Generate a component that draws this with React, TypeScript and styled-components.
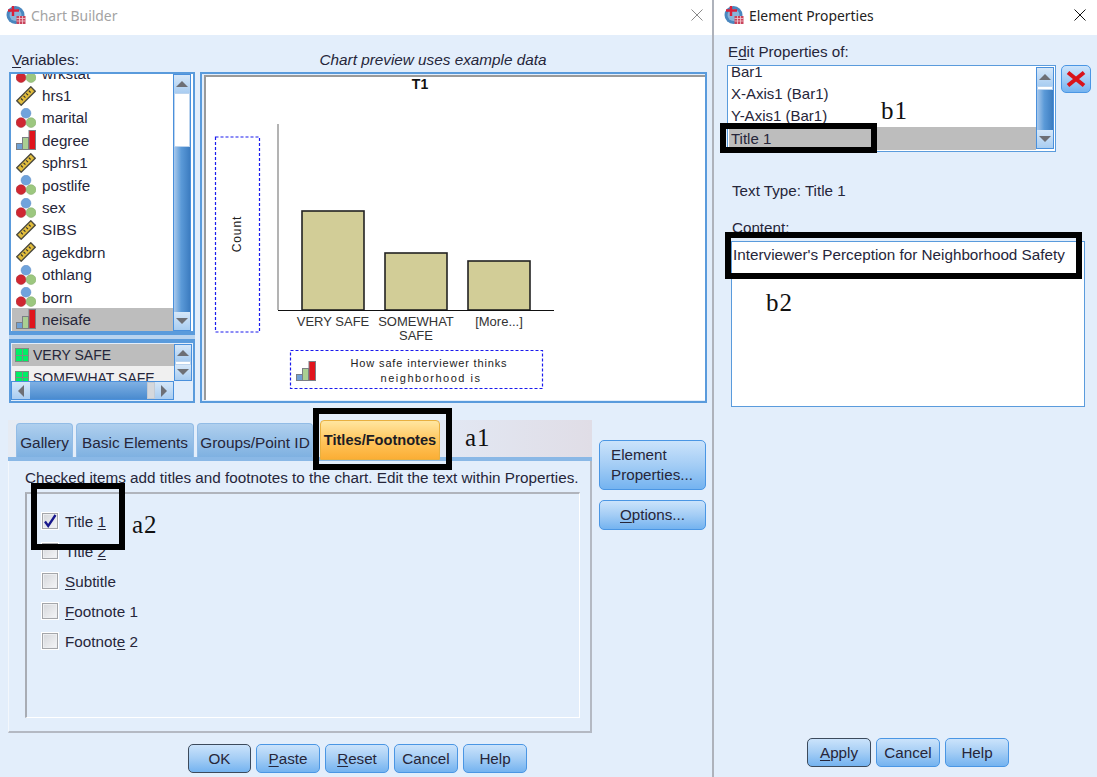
import React from 'react';
import styled, { createGlobalStyle, css } from 'styled-components';

const GlobalStyle = createGlobalStyle`
  html, body { margin: 0; padding: 0; background: #fff; }
  body { font-family: "Liberation Sans", Arial, sans-serif; color: #26263a; }
  * { box-sizing: border-box; }
  u { text-underline-offset: 2px; }
`;

const Shell = styled.div`
  position: relative;
  display: flex;
  width: 1097px;
  height: 777px;
  overflow: hidden;
`;

const Win = styled.div<{ $divider?: boolean }>`
  display: flex;
  flex-direction: column;
  height: 100%;
  ${(p) => (p.$divider ? 'width: 714px; border-right: 2px solid #aeb2bb;' : 'flex: 1;')}
`;

const TitleBar = styled.div<{ $left: number; $right: number }>`
  display: flex;
  align-items: center;
  height: 35px;
  flex: none;
  padding: 0 ${(p) => p.$right}px 5px ${(p) => p.$left}px;
  background: #fff;
`;

const TitleText = styled.span<{ $inactive?: boolean }>`
  flex: 1;
  margin-left: 5px;
  font-family: "Noto Sans", sans-serif;
  font-size: 13.9px;
  color: ${(p) => (p.$inactive ? '#a3a3a3' : '#222')};
`;

const Body = styled.div`
  display: flex;
  flex: 1;
  flex-direction: column;
  min-height: 0;
  background: #e3eefb;
`;

const CaptionRow = styled.div`
  display: grid;
  grid-template-columns: 188px 1fr;
  height: 37px;
  flex: none;
  padding-left: 12px;
  padding-top: 16px;
  font-size: 15.3px;
`;

const PreviewNote = styled.div`
  padding-right: 46px;
  text-align: center;
  font-style: italic;
`;

const TopRow = styled.div`
  display: grid;
  grid-template-columns: 186px 507px;
  gap: 5px;
  height: 331px;
  flex: none;
  margin-left: 9px;
`;

const SourceColumn = styled.div`
  display: flex;
  flex-direction: column;
`;

const listFrame = css`
  display: flex;
  overflow: hidden;
  border: 2px solid #5a9bdc;
  background: #fff;
`;

const VariableBox = styled.div`
  ${listFrame}
  height: 261px;
  padding-right: 1px;
`;

const Rows = styled.div<{ $shift: number }>`
  flex: 1;
  min-width: 0;
  padding-left: 1px;
  margin-top: ${(p) => p.$shift}px;
`;

const Row = styled.div<{ $selected?: boolean }>`
  display: flex;
  align-items: center;
  gap: 6px;
  height: 22.4px;
  padding-left: 4px;
  font-size: 15.2px;
  white-space: nowrap;
  background: ${(p) => (p.$selected ? '#bdbdbd' : 'transparent')};
`;

const Splitter = styled.div`
  height: 8px;
  border-top: 2px solid #5a9bdc;
  border-bottom: 2px solid #5a9bdc;
  background: #b8d3ef;
`;

const CategoryBox = styled.div`
  ${listFrame}
  position: relative;
  flex: 1;
  padding-top: 1px;
  background: #e3eefb;
`;

const CategoryRows = styled.div`
  flex: 1;
  min-width: 0;
  height: 37px;
  padding-left: 1px;
  overflow: hidden;
`;

const CategoryRow = styled(Row)`
  gap: 4px;
  padding-left: 3px;
  font-size: 14px;
  background: ${(p) => (p.$selected ? '#bdbdbd' : '#f0f0f0')};
`;

const Swatch = styled.span`
  display: grid;
  grid-template-columns: 1fr 1fr;
  gap: 1px;
  width: 14px;
  height: 14px;
  padding: 1px;
  background: #7f8a83;
  & > i { background: #00ee66; }
`;

const VScroll = styled.div<{ $h?: number }>`
  display: flex;
  flex: none;
  flex-direction: column;
  width: 18px;
  height: ${(p) => (p.$h ? `${p.$h}px` : '100%')};
  border: 1px solid #4a90dc;
  margin-right: 1px;
`;

const VTrack = styled.div`
  flex: 1;
  background: linear-gradient(90deg, #a9c9ec, #5b9ad8 45%, #3c7cc0);
`;

const VThumb = styled.div<{ $h: number }>`
  flex: none;
  height: ${(p) => p.$h}px;
  background: #fff;
  border: 1px solid #bcd4ee;
`;

const ArrowCell = styled.div`
  display: flex;
  flex: 1 0 auto;
  align-items: center;
  justify-content: center;
  min-height: 15px;
  background: linear-gradient(#d6e7f8, #a9cdf1);
`;

const FixedArrowCell = styled(ArrowCell)`
  flex: none;
  height: 18px;
`;

const Triangle = styled.i<{ $dir: 'up' | 'down' | 'left' | 'right' }>`
  width: 0;
  height: 0;
  ${(p) =>
    p.$dir === 'up' || p.$dir === 'down'
      ? `border-left: 6px solid transparent; border-right: 6px solid transparent;
         border-${p.$dir === 'up' ? 'bottom' : 'top'}: 6px solid #6d6f75;`
      : `border-top: 6px solid transparent; border-bottom: 6px solid transparent;
         border-${p.$dir === 'left' ? 'right' : 'left'}: 6px solid #6d6f75;`}
`;

const HScroll = styled.div`
  position: absolute;
  left: 0;
  right: 19px;
  bottom: 1px;
  display: flex;
  height: 19px;
  border: 1px solid #4a90dc;
  background: linear-gradient(#7fb0e3, #4a8bcf);
`;

const HArrow = styled(ArrowCell)`
  flex: none;
  width: 18px;
`;

const HThumb = styled.div`
  width: 8px;
  margin-left: auto;
  background: #d5d8dc;
  border: 1px solid #c3cbd4;
`;

const PreviewFrame = styled.div`
  height: 331px;
  border: 2px solid #5a9bdc;
  padding: 1px 0 1px 2px;
  background: #e3eefb;
`;

const PreviewCanvas = styled.div`
  width: 100%;
  height: 100%;
  overflow: hidden;
  border-top: 2px solid #9a9a9a;
  border-left: 2px solid #9a9a9a;
  background: #fff;
`;

const TabArea = styled.div`
  display: grid;
  grid-template-columns: 584px 107px;
  gap: 7px;
  margin: 17px 0 0 8px;
`;

const TabStrip = styled.div`
  display: flex;
  align-items: flex-end;
  gap: 3px;
  height: 41px;
  padding-left: 8px;
  border-bottom: 4px solid #8ab8e6;
  background: linear-gradient(90deg, #e6ebf3, #e3eefb 15%, #e3eefb 60%, #e0dde6);
`;

const Tab = styled.div<{ $w: number; $active?: boolean }>`
  flex: none;
  display: flex;
  align-items: center;
  justify-content: center;
  width: ${(p) => p.$w}px;
  white-space: nowrap;
  overflow: hidden;
  border-radius: 4px 4px 0 0;
  ${(p) =>
    p.$active
      ? css`
          height: 40px;
          margin: 0 0 -3px 4px;
          padding-bottom: 1px;
          font-size: 14.6px;
          font-weight: bold;
          color: #1c1c24;
          border: 1px solid #e8b040;
          background: linear-gradient(#ffe6a0, #ffc45a 55%, #fbae35);
        `
      : css`
          height: 34px;
          font-size: 15.4px;
          padding-top: 4px;
          border: 1px solid #92bce6;
          border-bottom: none;
          background: linear-gradient(#afcfee, #7fb1e1);
        `}
`;

const TabPanel = styled.div`
  height: 272px;
  padding: 8px 0 0 16px;
  border-right: 2px solid #b4b9c3;
  border-bottom: 2px solid #b4b9c3;
  border-left: 1px solid #f3f7fc;
  font-size: 15.25px;
  white-space: nowrap;
`;

const GroupBox = styled.div`
  width: 555px;
  height: 226px;
  margin-top: 6px;
  padding-top: 12px;
  border-top: 2px solid #b0b4bc;
  border-left: 2px solid #a8acb4;
  border-right: 1px solid #fff;
  border-bottom: 1px solid #fff;
`;

const CheckRow = styled.div`
  display: flex;
  align-items: center;
  gap: 7px;
  height: 30px;
  padding-left: 15px;
`;

const CheckBoxMark = styled.span`
  display: flex;
  align-items: center;
  justify-content: center;
  width: 16px;
  height: 16px;
  border: 1px solid #a4a6aa;
  outline: 1px solid #fff;
  background: linear-gradient(135deg, #d5d7db, #f4f5f7);
  box-shadow: inset 0 0 0 1px #eceef1;
`;

const SideButtons = styled.div`
  display: flex;
  flex-direction: column;
  gap: 10px;
  padding-top: 20px;
`;

const Footer = styled.div<{ $left: number; $bottom: number }>`
  display: flex;
  gap: 5px;
  margin-top: auto;
  padding: 0 0 ${(p) => p.$bottom}px ${(p) => p.$left}px;
`;

const Btn = styled.div<{ $w?: number; $h?: number; $default?: boolean; $left?: boolean }>`
  display: flex;
  align-items: center;
  justify-content: ${(p) => (p.$left ? 'flex-start' : 'center')};
  width: ${(p) => (p.$w ? `${p.$w}px` : '100%')};
  height: ${(p) => p.$h ?? 29}px;
  padding-left: ${(p) => (p.$left ? '11px' : '0')};
  font-size: 15.2px;
  line-height: 20px;
  border: 1.5px solid ${(p) => (p.$default ? '#3c4a5c' : '#4a96e4')};
  border-radius: 5px;
  background: linear-gradient(#cbe3fb, #a4cdf5 50%, #74b3f0);
`;

const RemoveBtn = styled(Btn)`
  flex: none;
  margin-left: 5px;
`;

const PropLabel = styled.div`
  height: 30px;
  padding: 9px 0 0 1px;
  font-size: 15.2px;
  line-height: 16px;
`;

const PropBody = styled.div`
  padding-left: 13px;
`;

const PropRow = styled.div`
  display: flex;
  align-items: flex-start;
`;

const ElementBox = styled.div`
  ${listFrame}
  width: 329px;
  height: 87px;
  padding-top: 1px;
  border-width: 1.5px;
`;

const ElementRow = styled(Row)`
  padding-left: 2px;
  font-size: 15px;
`;

const TextType = styled.div`
  margin: 30px 0 0 5px;
  font-size: 15.2px;
  line-height: 18px;
`;

const ContentLabel = styled.div`
  margin: 19px 0 0 5px;
  font-size: 15.2px;
  line-height: 18px;
`;

const ContentBox = styled.div`
  width: 354px;
  height: 166px;
  margin: 4px 0 0 4px;
  padding: 4px 0 0 1px;
  border: 1.5px solid #5a9bdc;
  background: #fff;
  font-size: 15.25px;
  white-space: nowrap;
`;

const Callout = styled.div<{ $x: number; $y: number; $w: number; $h: number }>`
  position: absolute;
  left: ${(p) => p.$x}px;
  top: ${(p) => p.$y}px;
  width: ${(p) => p.$w}px;
  height: ${(p) => p.$h}px;
  border: 6.5px solid #000;
`;

const CalloutTag = styled.div<{ $x: number; $y: number }>`
  position: absolute;
  left: ${(p) => p.$x}px;
  top: ${(p) => p.$y}px;
  font-family: "Liberation Serif", serif;
  font-size: 25px;
  line-height: 28px;
  letter-spacing: 1px;
  color: #111;
`;

const AppIcon = () => (
  <svg width="20" height="20" viewBox="0 0 20 20">
    <circle cx="9.5" cy="10" r="9" fill="#4a87bf" />
    <circle cx="9.5" cy="10" r="6" fill="#88b4da" />
    <path d="M2 5.5h11M7 1v10" stroke="#d8203a" strokeWidth="2.4" />
    <rect x="10.5" y="11" width="9" height="8" fill="#c9455c" />
    <path d="M10.5 13.5h9M10.5 16h9M13.5 11v8M16.5 11v8" stroke="#f3c9d0" strokeWidth="0.8" />
  </svg>
);

const CloseIcon = ({ color }: { color: string }) => (
  <svg width="14" height="14" viewBox="0 0 14 14">
    <path d="M1.5 1.5l11 11M12.5 1.5l-11 11" stroke={color} strokeWidth="1" fill="none" />
  </svg>
);

const NominalIcon = () => (
  <svg width="20" height="20" viewBox="0 0 20 20">
    <circle cx="10" cy="5.2" r="4.9" fill="#6fa3dc" stroke="#5a88c0" strokeWidth="0.5" />
    <circle cx="5" cy="14.6" r="4.9" fill="#cf2731" stroke="#a3212b" strokeWidth="0.5" />
    <circle cx="15" cy="14.6" r="4.9" fill="#9cc77f" stroke="#7ca663" strokeWidth="0.5" />
  </svg>
);

const ScaleIcon = () => (
  <svg width="20" height="20" viewBox="0 0 20 20">
    <path d="M0.8 14.8L14.8 0.8l4.4 4.4L5.2 19.2z" fill="#e2bd3c" stroke="#4c4a3e" strokeWidth="1.4" />
    <path d="M5 12.5l1.8 1.8M7.6 9.9l1.8 1.8M10.2 7.3l1.8 1.8M12.8 4.7l1.8 1.8" stroke="#333" strokeWidth="1.2" />
  </svg>
);

const OrdinalBars = () => (
  <>
    <rect x="0.5" y="13.5" width="6" height="6" fill="#6fa0d4" stroke="#7b7f85" />
    <rect x="6.5" y="7.5" width="6" height="12" fill="#a9cf92" stroke="#7b7f85" />
    <rect x="13" y="0.5" width="6.5" height="19" fill="#e0141c" stroke="#7b7f85" />
  </>
);

const OrdinalIcon = () => (
  <svg width="20" height="20" viewBox="0 0 20 20">
    <OrdinalBars />
  </svg>
);

const CheckGlyph = () => (
  <svg width="14" height="14" viewBox="0 0 14 14">
    <path d="M2 7.5l3.2 4.5L12.5 1" stroke="#17178c" strokeWidth="2.3" fill="none" />
  </svg>
);

const RedCross = () => (
  <svg width="22" height="18" viewBox="0 0 22 18">
    <path d="M3 2.5l16 13M19 2.5l-16 13" stroke="#d9131a" strokeWidth="4" fill="none" />
  </svg>
);

const kinds = { nominal: NominalIcon, scale: ScaleIcon, ordinal: OrdinalIcon };

const variables: { name: string; kind: keyof typeof kinds }[] = [
  { name: 'wrkstat', kind: 'nominal' },
  { name: 'hrs1', kind: 'scale' },
  { name: 'marital', kind: 'nominal' },
  { name: 'degree', kind: 'ordinal' },
  { name: 'sphrs1', kind: 'scale' },
  { name: 'postlife', kind: 'nominal' },
  { name: 'sex', kind: 'nominal' },
  { name: 'SIBS', kind: 'scale' },
  { name: 'agekdbrn', kind: 'scale' },
  { name: 'othlang', kind: 'nominal' },
  { name: 'born', kind: 'nominal' },
  { name: 'neisafe', kind: 'ordinal' },
];

const bars = [
  { x: 302, y: 211, label: ['VERY SAFE'] },
  { x: 385, y: 253, label: ['SOMEWHAT', 'SAFE'] },
  { x: 468, y: 261, label: ['[More...]'] },
];

// viewBox keeps the numbers in page coordinates, it is easier to compare that way
const ChartPreview = () => (
  <svg width="500" height="325" viewBox="206 77 500 325" fontFamily="Liberation Sans, sans-serif">
    <text x="420" y="89" textAnchor="middle" fontSize="14" fontWeight="bold" fill="#111">T1</text>
    <rect x="215.5" y="137" width="44" height="195" fill="none" stroke="#1a1aee" strokeWidth="1.2" strokeDasharray="3 2" />
    <text transform="translate(241 234) rotate(-90)" textAnchor="middle" fontSize="12" letterSpacing="0.9" fill="#222">Count</text>
    <path d="M278 124v186" stroke="#a0a0a0" strokeWidth="1.6" />
    {bars.map((b) => (
      <g key={b.x}>
        <rect x={b.x} y={b.y} width="62" height={310 - b.y} fill="#d2cd97" stroke="#222" strokeWidth="1.6" />
        {b.label.map((line, i) => (
          <text key={line} x={b.x + 31} y={326 + i * 14} textAnchor="middle" fontSize="13" fill="#333">{line}</text>
        ))}
      </g>
    ))}
    <path d="M278 310.5h276" stroke="#111" strokeWidth="1.2" />
    <rect x="290.5" y="350.5" width="252" height="38" fill="none" stroke="#1a1aee" strokeWidth="1.2" strokeDasharray="3 2" />
    <g transform="translate(296 361)">
      <OrdinalBars />
    </g>
    <text x="429" y="367" textAnchor="middle" fontSize="11" letterSpacing="0.85" fill="#222">How safe interviewer thinks</text>
    <text x="431" y="382" textAnchor="middle" fontSize="11" letterSpacing="1.5" fill="#222">neighborhood is</text>
  </svg>
);

const titleOptions = [
  { label: <>Title <u>1</u></>, checked: true },
  { label: <>Title <u>2</u></> },
  { label: <><u>S</u>ubtitle</> },
  { label: <><u>F</u>ootnote 1</> },
  { label: <>Footnot<u>e</u> 2</> },
];

const elementRows = ['Bar1', 'X-Axis1 (Bar1)', 'Y-Axis1 (Bar1)', 'Title 1'];

export default function App() {
  return (
    <Shell>
      <GlobalStyle />
      <Win $divider>
        <TitleBar $left={6} $right={8}>
          <AppIcon />
          <TitleText $inactive>Chart Builder</TitleText>
          <CloseIcon color="#8a8a8a" />
        </TitleBar>
        <Body>
          <CaptionRow>
            <div><u>V</u>ariables:</div>
            <PreviewNote>Chart preview uses example data</PreviewNote>
          </CaptionRow>
          <TopRow>
            <SourceColumn>
              <VariableBox>
                <Rows $shift={-12}>
                  {variables.map((v) => {
                    const Icon = kinds[v.kind];
                    return (
                      <Row key={v.name} $selected={v.name === 'neisafe'}>
                        <Icon />
                        {v.name}
                      </Row>
                    );
                  })}
                </Rows>
                <VScroll>
                  <FixedArrowCell><Triangle $dir="up" /></FixedArrowCell>
                  <VThumb $h={54} />
                  <VTrack />
                  <FixedArrowCell><Triangle $dir="down" /></FixedArrowCell>
                </VScroll>
              </VariableBox>
              <Splitter />
              <CategoryBox>
                <CategoryRows>
                  <CategoryRow $selected>
                    <Swatch><i /><i /><i /><i /></Swatch>
                    VERY SAFE
                  </CategoryRow>
                  <CategoryRow>
                    <Swatch><i /><i /><i /><i /></Swatch>
                    SOMEWHAT SAFE
                  </CategoryRow>
                </CategoryRows>
                <VScroll $h={37}>
                  <ArrowCell><Triangle $dir="up" /></ArrowCell>
                  <VThumb $h={4} />
                  <ArrowCell><Triangle $dir="down" /></ArrowCell>
                </VScroll>
                <HScroll>
                  <HArrow><Triangle $dir="left" /></HArrow>
                  <HThumb />
                  <HArrow><Triangle $dir="right" /></HArrow>
                </HScroll>
              </CategoryBox>
            </SourceColumn>
            <PreviewFrame>
              <PreviewCanvas>
                <ChartPreview />
              </PreviewCanvas>
            </PreviewFrame>
          </TopRow>
          <TabArea>
            <div>
              <TabStrip>
                <Tab $w={57}>Gallery</Tab>
                <Tab $w={118}>Basic Elements</Tab>
                <Tab $w={116}>Groups/Point ID</Tab>
                <Tab $w={120} $active>Titles/Footnotes</Tab>
              </TabStrip>
              <TabPanel>
                Checked items add titles and footnotes to the chart. Edit the text within Properties.
                <GroupBox>
                  {titleOptions.map((o, i) => (
                    <CheckRow key={i}>
                      <CheckBoxMark>{o.checked && <CheckGlyph />}</CheckBoxMark>
                      <span>{o.label}</span>
                    </CheckRow>
                  ))}
                </GroupBox>
              </TabPanel>
            </div>
            <SideButtons>
              <Btn $h={50} $left>Element<br />Properties...</Btn>
              <Btn $h={30}><span><u>O</u>ptions...</span></Btn>
            </SideButtons>
          </TabArea>
          <Footer $left={188} $bottom={4}>
            <Btn $w={63} $default>OK</Btn>
            <Btn $w={64}><span><u>P</u>aste</span></Btn>
            <Btn $w={64}><span><u>R</u>eset</span></Btn>
            <Btn $w={64}>Cancel</Btn>
            <Btn $w={64}>Help</Btn>
          </Footer>
        </Body>
      </Win>
      <Win>
        <TitleBar $left={10} $right={10}>
          <AppIcon />
          <TitleText>Element Properties</TitleText>
          <CloseIcon color="#111" />
        </TitleBar>
        <Body>
          <PropBody>
            <PropLabel>E<u>d</u>it Properties of:</PropLabel>
            <PropRow>
              <ElementBox>
                <Rows $shift={-7}>
                  {elementRows.map((r) => (
                    <ElementRow key={r} $selected={r === 'Title 1'}>{r}</ElementRow>
                  ))}
                </Rows>
                <VScroll $h={82}>
                  <FixedArrowCell><Triangle $dir="up" /></FixedArrowCell>
                  <VThumb $h={4} />
                  <VTrack />
                  <FixedArrowCell><Triangle $dir="down" /></FixedArrowCell>
                </VScroll>
              </ElementBox>
              <RemoveBtn $w={30} $h={28}><RedCross /></RemoveBtn>
            </PropRow>
            <TextType>Text Type: Title 1</TextType>
            <ContentLabel>Content:</ContentLabel>
            <ContentBox>Interviewer's Perception for Neighborhood Safety</ContentBox>
          </PropBody>
          <Footer $left={93} $bottom={10}>
            <Btn $w={64} $default><span><u>A</u>pply</span></Btn>
            <Btn $w={64}>Cancel</Btn>
            <Btn $w={64}>Help</Btn>
          </Footer>
        </Body>
      </Win>
      <Callout $x={313} $y={408} $w={139} $h={62} />
      <CalloutTag $x={465} $y={424}>a1</CalloutTag>
      <Callout $x={31} $y={483} $w={94} $h={67} />
      <CalloutTag $x={132} $y={511}>a2</CalloutTag>
      <Callout $x={720} $y={123} $w={157} $h={30} />
      <CalloutTag $x={881} $y={97}>b1</CalloutTag>
      <Callout $x={725} $y={232} $w={357} $h={47} />
      <CalloutTag $x={766} $y={289}>b2</CalloutTag>
    </Shell>
  );
}
